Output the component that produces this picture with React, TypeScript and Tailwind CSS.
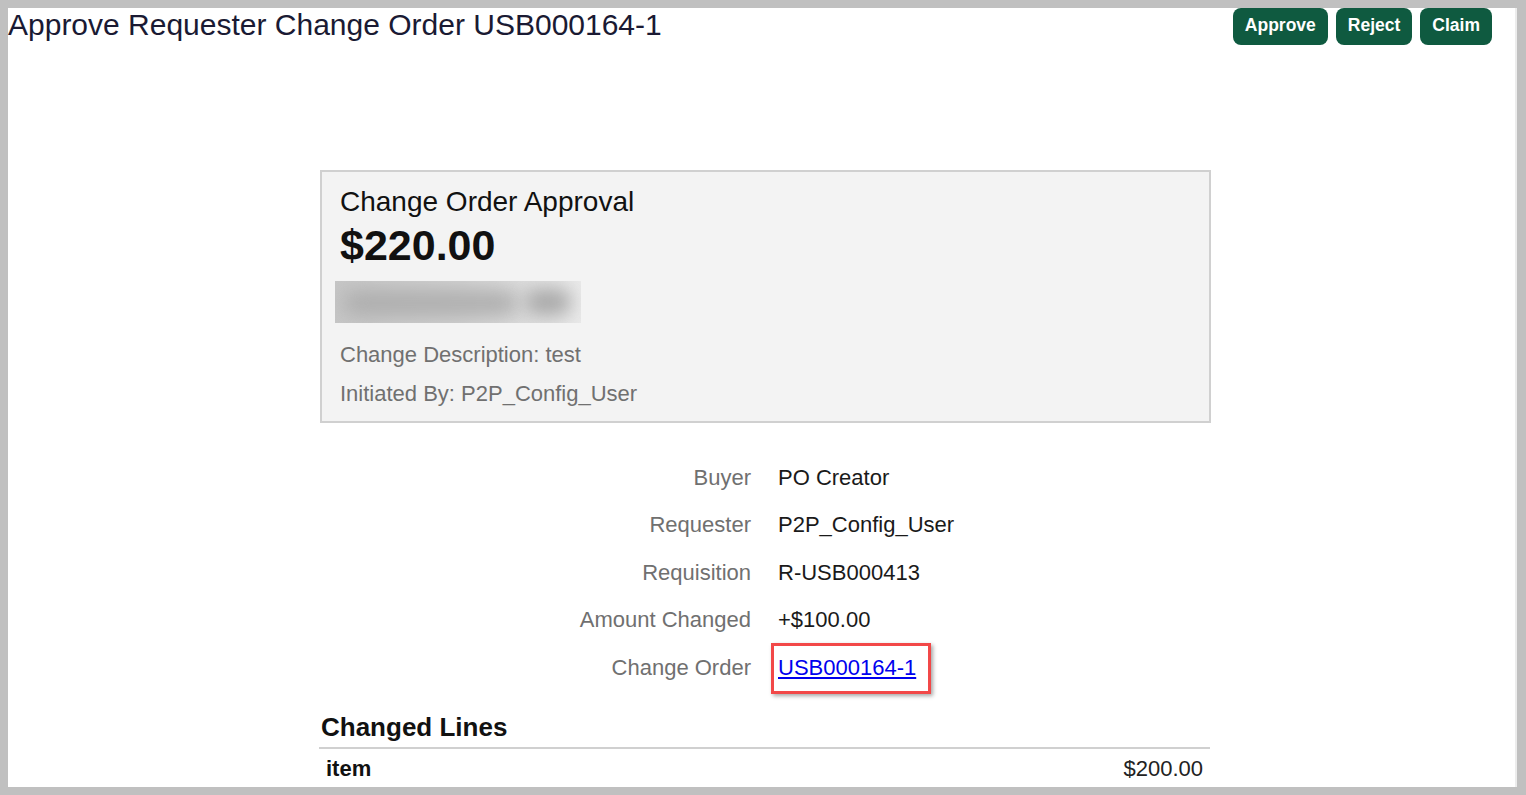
import React from 'react';

interface Detail {
  label: string;
  value: string;
  link?: boolean;
}

const details: Detail[] = [
  { label: 'Buyer', value: 'PO Creator' },
  { label: 'Requester', value: 'P2P_Config_User' },
  { label: 'Requisition', value: 'R-USB000413' },
  { label: 'Amount Changed', value: '+$100.00' },
  { label: 'Change Order', value: 'USB000164-1', link: true },
];

function ActionButton({ label }: { label: string }) {
  return (
    <button className="rounded-[8px] bg-[#0f5a40] px-[12px] pb-[3px] text-[17.5px] font-bold leading-[34px] text-white">
      {label}
    </button>
  );
}

export default function App() {
  return (
    <div className="h-screen w-full overflow-hidden bg-[#c0c0c0] pb-2 pl-2 pr-[9px] pt-2 font-['Liberation_Sans',Arial,sans-serif]">
      <div className="h-full border-r-2 border-[#ececec] bg-white">
        {/* Header */}
        <div className="flex items-start justify-between">
          <h1 className="text-[30px] font-normal leading-[34px] text-[#1a1a33]">
            Approve Requester Change Order USB000164-1
          </h1>
          <div className="mr-[23px] flex gap-2">
            <ActionButton label="Approve" />
            <ActionButton label="Reject" />
            <ActionButton label="Claim" />
          </div>
        </div>

        <div className="ml-[312px] mt-[125px] w-[891px]">
          {/* Summary card */}
          <div className="border-2 border-[#d0d0d0] bg-[#f3f3f3] pb-[8px] pl-[18px] pt-[15px] text-[#111]">
            <div className="text-[28px] leading-[30px]">Change Order Approval</div>
            <div className="mt-[4px] text-[43px] font-bold leading-[48px]">$220.00</div>
            <div className="relative -ml-[5px] mt-[12px] h-[42px] w-[246px] overflow-hidden bg-gradient-to-r from-[#c6c6c6] via-[#d0d0d0] to-[#e9e9e9]">
              <div className="absolute left-[8px] top-[10px] h-[24px] w-[175px] rounded-full bg-[#acacac] blur-[10px]" />
              <div className="absolute left-[190px] top-[8px] h-[26px] w-[46px] rounded-full bg-[#a9a9a9] blur-[9px]" />
            </div>
            <div className="mt-[12px] text-[22px] leading-[39px] text-[#707070]">
              <div>Change Description: test</div>
              <div>Initiated By: P2P_Config_User</div>
            </div>
          </div>

          {/* Details */}
          <div className="mt-[30.5px] text-[22px] leading-[47.5px]">
            {details.map((d) => (
              <div key={d.label} className="grid grid-cols-2">
                <div className="pr-[14.5px] text-right text-[#707070]">{d.label}</div>
                <div className="pl-[12.5px] text-[#1a1a1a]">
                  {d.link ? (
                    <span className="relative inline-block">
                      <a href="#" className="text-[#0000ee] underline">
                        {d.value}
                      </a>
                      <span className="pointer-events-none absolute -left-[7px] -top-[1px] h-[51px] w-[160px] border-[3px] border-[#f24848] shadow-[2px_2px_4px_rgba(0,0,0,0.35)]" />
                    </span>
                  ) : (
                    d.value
                  )}
                </div>
              </div>
            ))}
          </div>

          {/* Changed lines */}
          <div className="-ml-[1px] mt-[20px] w-[891px]">
            <h2 className="border-b-2 border-[#d0d0d0] pb-[4px] pl-[2px] text-[26px] font-bold leading-[32px] text-[#111]">
              Changed Lines
            </h2>
            <div className="flex justify-between pl-[7px] pr-[7px] text-[22px] leading-[39px] text-[#111]">
              <span className="font-bold">item</span>
              <span className="text-[#222]">$200.00</span>
            </div>
          </div>
        </div>
      </div>
    </div>
  );
}
